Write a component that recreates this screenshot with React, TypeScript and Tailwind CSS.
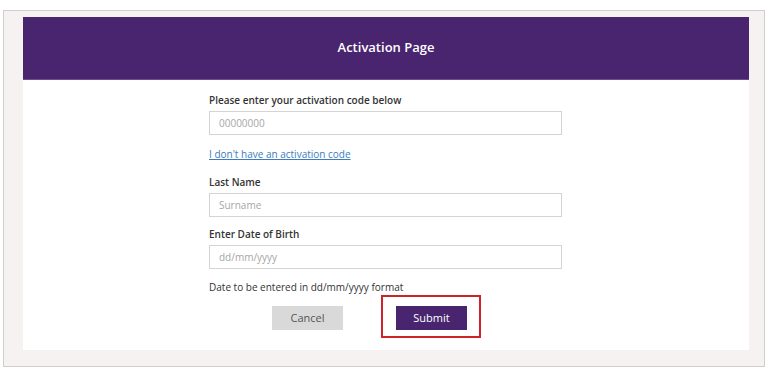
import React from 'react';

const font = { fontFamily: '"Open Sans", "Noto Sans", sans-serif' };

interface FieldProps {
  label: string;
  placeholder: string;
}

const Field: React.FC<FieldProps> = ({ label, placeholder }) => (
  <div>
    <label className="block text-[10px] font-semibold leading-[14px] text-[#333333]">{label}</label>
    <input
      type="text"
      placeholder={placeholder}
      className="mt-[4px] block h-[24px] w-[353px] border border-[#d4d4d4] bg-white px-[9px] text-[10px] text-[#333] placeholder:text-[#a6a6a6] outline-none"
    />
  </div>
);

export default function App() {
  return (
    <div className="min-h-[371px] bg-white pt-[10px] pl-[3px] pr-[3px]" style={font}>
      <div className="h-[357px] border border-[#cfcfcf] bg-[#f6f2f1] pt-[6px] pl-[19px] pr-[15px] pb-[16px]">
        <div className="flex h-[333px] flex-col bg-white">
          <div className="flex h-[63px] items-center justify-center bg-[#4a256f] border-b border-[#6b4d8c]">
            <h1 className="text-[13px] font-semibold text-white">Activation Page</h1>
          </div>
          <div className="pl-[186px] pt-[13px]">
            <Field label="Please enter your activation code below" placeholder="00000000" />
            <a href="#" className="mt-[12px] block w-fit text-[10px] leading-[14px] text-[#3a7cc0] underline">
              I don't have an activation code
            </a>
            <div className="mt-[14px]">
              <Field label="Last Name" placeholder="Surname" />
            </div>
            <div className="mt-[10px]">
              <Field label="Enter Date of Birth" placeholder="dd/mm/yyyy" />
            </div>
            <p className="mt-[11px] text-[10px] leading-[14px] text-[#333]">Date to be entered in dd/mm/yyyy format</p>
            <div className="mt-[12px] flex items-start gap-[53px] pl-[63px]">
              <button className="block h-[24px] w-[71px] bg-[#d9d9d9] text-[11px] text-[#555]">Cancel</button>
              <div className="relative">
                <button className="block h-[24px] w-[71px] bg-[#4a256f] text-[11px] text-white">Submit</button>
                <div className="pointer-events-none absolute -top-[11px] -left-[15px] -right-[14px] -bottom-[8px] border-2 border-[#d0222a]" />
              </div>
            </div>
          </div>
        </div>
      </div>
    </div>
  );
}
